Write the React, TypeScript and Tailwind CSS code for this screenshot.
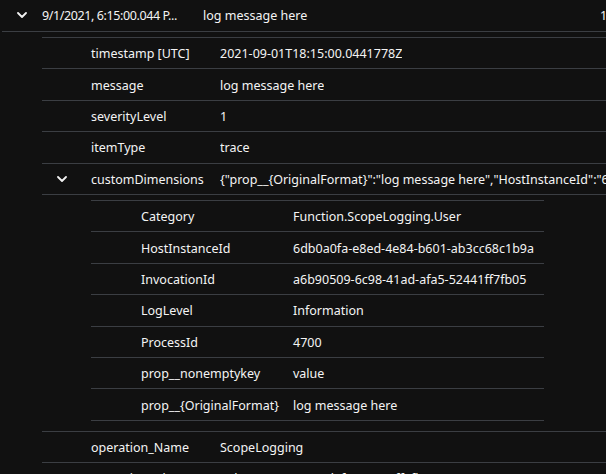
import React from "react";

const Chevron: React.FC<{ className?: string }> = ({ className }) => (
  <svg width="10" height="6" viewBox="0 0 10 6" className={className}>
    <path d="M1 1l4 4 4-4" fill="none" stroke="#f2f2f2" strokeWidth="1.8" strokeLinecap="round" strokeLinejoin="round" />
  </svg>
);

const outerRows = [
  { key: "timestamp [UTC]", value: "2021-09-01T18:15:00.0441778Z" },
  { key: "message", value: "log message here" },
  { key: "severityLevel", value: "1" },
  { key: "itemType", value: "trace" },
];

const customDims = [
  { key: "Category", value: "Function.ScopeLogging.User" },
  { key: "HostInstanceId", value: "6db0a0fa-e8ed-4e84-b601-ab3cc68c1b9a" },
  { key: "InvocationId", value: "a6b90509-6c98-41ad-afa5-52441ff7fb05" },
  { key: "LogLevel", value: "Information" },
  { key: "ProcessId", value: "4700" },
  { key: "prop__nonemptykey", value: "value" },
  { key: "prop__{OriginalFormat}", value: "log message here" },
];

const afterRows = [
  { key: "operation_Name", value: "ScopeLogging" },
  { key: "operation_Id", value: "a6b90509c98e41adafa552441ff7fb05" },
];

const Row: React.FC<{ k: string; v: string; chevron?: boolean }> = ({ k, v, chevron }) => (
  <div className="flex items-center h-[31.4px] pt-[3px] border-b border-[#3b3e43] whitespace-nowrap">
    <div className="w-[49px] shrink-0 flex justify-center pr-[9px] -mt-[3px]">
      {chevron && <Chevron />}
    </div>
    <div className="w-[129px] shrink-0">{k}</div>
    <div className="overflow-hidden">{v}</div>
  </div>
);

const App: React.FC = () => {
  return (
    <div
      className="w-[606px] h-[474px] overflow-hidden bg-[#111111] text-[#f4f4f4] text-[12.5px]"
      style={{ fontFamily: '"Noto Sans", "Open Sans", sans-serif' }}
    >
      <div className="flex items-center h-[32px] pt-[2px] ml-[2px] border-b border-[#3b3e43] whitespace-nowrap">
        <div className="w-[40px] shrink-0 flex justify-center -mt-[3px]">
          <Chevron />
        </div>
        <div className="w-[161px] shrink-0 tracking-[-0.4px]">9/1/2021, 6:15:00.044 P...</div>
        <div className="flex-1">log message here</div>
        <div className="w-[6px] overflow-hidden">1</div>
      </div>

      <div className="pl-[42px] pt-[5px]">
        <div className="border-t border-[#3b3e43]">
          {outerRows.map((r) => (
            <Row key={r.key} k={r.key} v={r.value} />
          ))}
          <Row
            k="customDimensions"
            chevron
            v={'{"prop__{OriginalFormat}":"log message here","HostInstanceId":"6db0a0fa-e8ed-4e84-b601-ab3cc68c1b9a"}'}
          />
          <div className="pl-[49px] pt-[5px] pb-[10px] border-b border-[#3b3e43]">
            <div className="w-[453px] border-t border-[#3b3e43]">
              {customDims.map((r) => (
                <div
                  key={r.key}
                  className="flex items-center h-[31.4px] pt-[3px] border-b border-[#3b3e43] whitespace-nowrap"
                >
                  <div className="w-[50px] shrink-0" />
                  <div className="w-[152px] shrink-0">{r.key}</div>
                  <div>{r.value}</div>
                </div>
              ))}
            </div>
          </div>
          {afterRows.map((r) => (
            <Row key={r.key} k={r.key} v={r.value} />
          ))}
        </div>
      </div>
    </div>
  );
};

export default App;
